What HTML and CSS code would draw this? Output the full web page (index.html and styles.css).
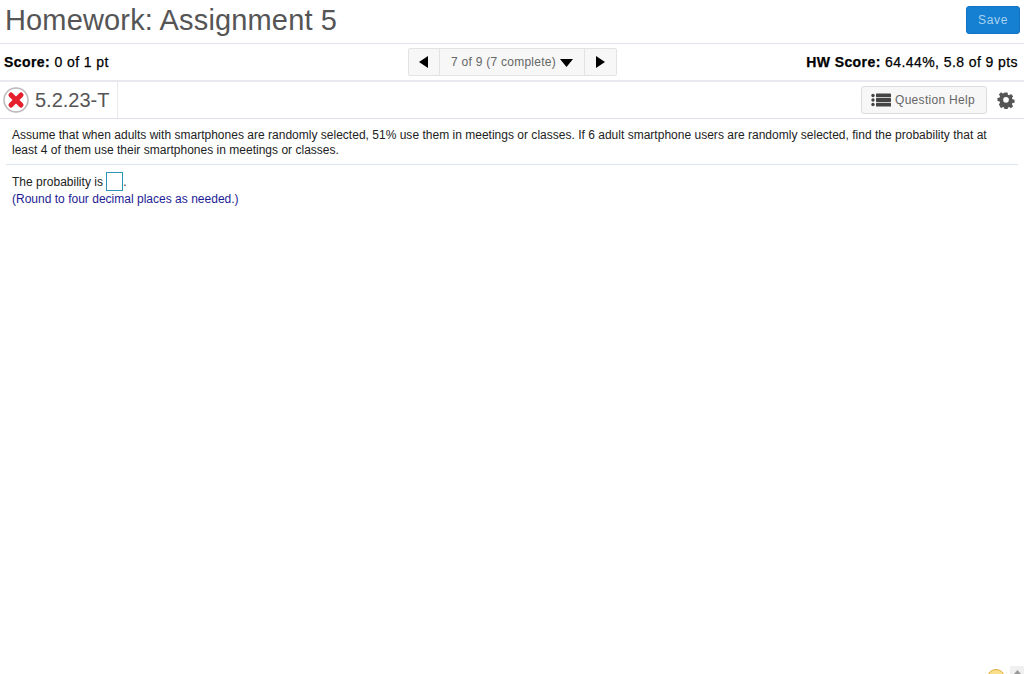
FILE: index.html
```html
<!DOCTYPE html>
<html lang="en">
<head>
<meta charset="utf-8">
<title>Homework: Assignment 5</title>
<link rel="stylesheet" href="styles.css">
</head>
<body>
<header class="title-bar">
  <h1 class="title">Homework: Assignment 5</h1>
  <button class="save">Save</button>
</header>
<div class="score-bar">
  <div class="score"><b>Score:</b> 0 of 1 pt</div>
  <nav class="pager">
    <span class="pager-btn pager-prev"><svg width="9" height="12" viewBox="0 0 9 12"><path d="M9 0v12L0 6z"/></svg></span>
    <span class="pager-label">7 of 9 (7 complete)<svg class="caret" width="13" height="8" viewBox="0 0 13 8"><path d="M0 0h13L6.500 8z"/></svg></span>
    <span class="pager-btn pager-next"><svg width="9" height="12" viewBox="0 0 9 12"><path d="M0 0v12l9-6z"/></svg></span>
  </nav>
  <div class="hw-score"><b>HW Score:</b> 64.44%, 5.8 of 9 pts</div>
</div>
<div class="question-bar">
  <div class="question-id">
    <svg class="status" width="26" height="26" viewBox="0 0 26 26"><circle cx="13" cy="13" r="12" fill="#fff" stroke="#b9b9b9" stroke-width="1.500"/><path d="M8 8l10 10M18 8L8 18" stroke="#e3202c" stroke-width="5" stroke-linecap="round"/></svg>
    <span>5.2.23-T</span>
  </div>
  <div class="tools">
    <button class="help"><svg width="20" height="14" viewBox="0 0 20 14" fill="#444"><circle cx="2" cy="2.500" r="1.700"/><circle cx="2" cy="7" r="1.700"/><circle cx="2" cy="11.500" r="1.700"/><rect x="5" y="0.500" width="15" height="3.800" rx=".6"/><rect x="5" y="5.100" width="15" height="3.800" rx=".6"/><rect x="5" y="9.700" width="15" height="3.800" rx=".6"/></svg>Question Help</button>
    <svg class="gear" width="18" height="18" viewBox="0 0 18 18"><path fill="#555" fill-rule="evenodd" d="M7.300.8h3.400l.5 2.400 1.300.6 2.100-1.300 2.400 2.400-1.300 2.100.5 1.300 2.400.5v3.400l-2.400.5-.5 1.300 1.300 2.100-2.400 2.400-2.100-1.300-1.300.5-.5 2.400H7.300l-.5-2.400-1.300-.5-2.100 1.300L1 14.200l1.300-2.100-.5-1.300-2.400-.5V6.900l2.400-.5.500-1.300L1 3l2.400-2.400 2.100 1.300 1.300-.6zM9 5.800a3.200 3.200 0 1 0 0 6.400 3.200 3.200 0 0 0 0-6.400z" transform="translate(1 0.800) scale(.89)"/></svg>
  </div>
</div>
<main class="content">
  <p class="question">Assume that when adults with smartphones are randomly selected, 51% use them in meetings or classes. If 6 adult smartphone users are randomly selected, find the probability that at least 4 of them use their smartphones in meetings or classes.</p>
  <div class="answer">
    <p class="answer-line">The probability is <span class="answer-box"></span>.</p>
    <p class="hint">(Round to four decimal places as needed.)</p>
  </div>
</main>
<div class="corner"><span class="smiley"></span><span class="scroll-up"><svg width="7" height="4" viewBox="0 0 7 4"><path fill="#999" d="M0 4L3.500 0 7 4z"/></svg></span></div>
</body>
</html>
```

FILE: styles.css
```css
* { box-sizing: border-box; }
html, body { height: 100%; }
body {
  margin: 0;
  background: #fff;
  font-family: "Liberation Sans", Arial, sans-serif;
  color: #000;
  overflow: hidden;
  position: relative;
}
.title-bar {
  height: 44px;
  display: flex;
  align-items: center;
  justify-content: space-between;
  padding: 0 4px 3px 5px;
  border-bottom: 1px solid #e2e2ea;
}
.title {
  margin: 0;
  font-size: 29px;
  font-weight: 400;
  letter-spacing: .15px;
  color: #555;
}
.save {
  width: 54px;
  height: 28px;
  border: 1px solid #1273c4;
  border-radius: 3px;
  background: #1580d2;
  color: #a9d2f0;
  font: 12px "Liberation Sans", Arial, sans-serif;
  letter-spacing: .7px;
  padding: 0;
}
.score-bar {
  height: 38px;
  display: grid;
  grid-template-columns: 1fr auto 1fr;
  align-items: center;
  padding: 0 4px;
  border-bottom: 2px solid #e8e8ee;
  font-size: 14px;
}
.score b, .hw-score b { font-weight: 700; }
.score, .hw-score { font-size: 14px; letter-spacing: .42px; -webkit-text-stroke: .25px #000; }
.hw-score { text-align: right; margin-right: 2px; }
.pager {
  display: flex;
  width: 209px;
  height: 28px;
  border: 1px solid #e3e3e3;
  border-radius: 2px;
  background: #f7f7f7;
}
.pager-btn {
  flex: 1;
  display: flex;
  align-items: center;
  justify-content: center;
}
.pager-label {
  width: 146px;
  display: flex;
  align-items: center;
  justify-content: center;
  gap: 4px;
  border-left: 1px solid #e3e3e3;
  border-right: 1px solid #e3e3e3;
  font-size: 12px;
  letter-spacing: .25px;
  color: #666;
}
.caret { margin-top: 1px; }
.question-bar {
  height: 37px;
  display: flex;
  justify-content: space-between;
  align-items: center;
  border-bottom: 1px solid #e0e0e8;
  padding-right: 9px;
}
.question-id {
  height: 100%;
  width: 118px;
  display: flex;
  align-items: center;
  gap: 6px;
  padding-left: 3px;
  border-right: 1px solid #e8e8ee;
  font-size: 20px;
  color: #555;
}
.tools {
  display: flex;
  align-items: center;
  gap: 10px;
}
.help {
  width: 126px;
  height: 28px;
  display: flex;
  align-items: center;
  gap: 4px;
  border: 1px solid #ddd;
  border-radius: 3px;
  background: #f7f7f7;
  color: #666;
  font: 12px "Liberation Sans", Arial, sans-serif;
  letter-spacing: .3px;
  padding: 0 0 0 9px;
}
.content {
  padding: 9px 6px 0 12px;
  font-size: 12px;
  line-height: 15px;
  letter-spacing: .012px;
}
.question {
  margin: 0;
  padding: 0 24px 6px 0;
  color: #222;
}
.answer {
  margin-left: -6px;
  padding: 7px 0 0 6px;
  border-top: 1px solid #dde3ea;
}
.answer-line {
  margin: 0 0 1px;
  color: #222;
  line-height: 18px;
}
.answer-box {
  display: inline-block;
  width: 17px;
  height: 19px;
  border: 1px solid #2f95b8;
  vertical-align: -5px;
}
.hint {
  margin: 0;
  color: #1c1c96;
}
.corner {
  position: absolute;
  right: 0;
  bottom: 0;
  display: flex;
  align-items: flex-end;
  gap: 5px;
  height: 8px;
  overflow: hidden;
}
.smiley {
  width: 18px;
  height: 18px;
  margin-bottom: -13px;
  border: 1px solid #d9b040;
  border-radius: 50%;
  background: #fbe08c;
}
.scroll-up {
  width: 14px;
  height: 8px;
  display: flex;
  align-items: flex-end;
  justify-content: center;
  background: #f0f0f0;
}
```
